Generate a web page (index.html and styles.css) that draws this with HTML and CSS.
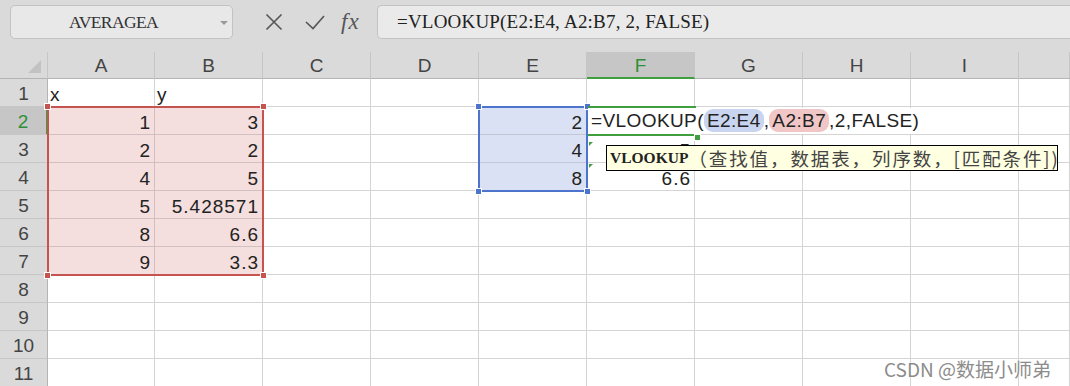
FILE: index.html
```html
<!DOCTYPE html>
<html lang="zh-CN">
    <head>
        <meta charset="UTF-8" />
        <title>VLOOKUP</title>
        <link rel="stylesheet" href="styles.css">
    </head>
    <body>
        <div class="toolbar">
            <div class="namebox">AVERAGEA<span class="caret"></span></div>
            <div class="fbtns">
                <svg class="ico" width="20" height="20" viewBox="0 0 20 20"><path d="M2.5 2.5 L17.5 17.5 M17.5 2.5 L2.5 17.5" /></svg>
                <svg class="ico ok" width="20" height="20" viewBox="0 0 20 20"><path d="M1 10 L8 16.5 L19 4" /></svg>
                <span class="fx">fx</span>
            </div>
            <div class="formula">=VLOOKUP(E2:E4, A2:B7, 2, FALSE)</div>
        </div>

        <div class="sheet">
            <div class="row head">
                <div class="corner"><span class="tri"></span></div>
                <div class="ch">A</div><div class="ch">B</div><div class="ch">C</div><div class="ch">D</div><div class="ch">E</div>
                <div class="ch sel">F</div><div class="ch">G</div><div class="ch">H</div><div class="ch">I</div><div class="ch"></div>
            </div>
            <div class="row">
                <div class="rh">1</div>
                <div class="c">x</div><div class="c">y</div><div class="c"></div><div class="c"></div><div class="c"></div>
                <div class="c"></div><div class="c"></div><div class="c"></div><div class="c"></div><div class="c"></div>
            </div>
            <div class="row">
                <div class="rh sel">2</div>
                <div class="c num red">1</div><div class="c num red">3</div><div class="c"></div><div class="c"></div><div class="c num blue">2</div>
                <div class="c"></div><div class="c"></div><div class="c"></div><div class="c"></div><div class="c"></div>
            </div>
            <div class="row">
                <div class="rh">3</div>
                <div class="c num red">2</div><div class="c num red">2</div><div class="c"></div><div class="c"></div><div class="c num blue">4</div>
                <div class="c num">5</div><div class="c"></div><div class="c"></div><div class="c"></div><div class="c"></div>
            </div>
            <div class="row">
                <div class="rh">4</div>
                <div class="c num red">4</div><div class="c num red">5</div><div class="c"></div><div class="c"></div><div class="c num blue">8</div>
                <div class="c num">6.6</div><div class="c"></div><div class="c"></div><div class="c"></div><div class="c"></div>
            </div>
            <div class="row">
                <div class="rh">5</div>
                <div class="c num red">5</div><div class="c num red">5.428571</div><div class="c"></div><div class="c"></div><div class="c"></div>
                <div class="c"></div><div class="c"></div><div class="c"></div><div class="c"></div><div class="c"></div>
            </div>
            <div class="row">
                <div class="rh">6</div>
                <div class="c num red">8</div><div class="c num red">6.6</div><div class="c"></div><div class="c"></div><div class="c"></div>
                <div class="c"></div><div class="c"></div><div class="c"></div><div class="c"></div><div class="c"></div>
            </div>
            <div class="row">
                <div class="rh">7</div>
                <div class="c num red">9</div><div class="c num red">3.3</div><div class="c"></div><div class="c"></div><div class="c"></div>
                <div class="c"></div><div class="c"></div><div class="c"></div><div class="c"></div><div class="c"></div>
            </div>
            <div class="row">
                <div class="rh">8</div>
                <div class="c"></div><div class="c"></div><div class="c"></div><div class="c"></div><div class="c"></div>
                <div class="c"></div><div class="c"></div><div class="c"></div><div class="c"></div><div class="c"></div>
            </div>
            <div class="row">
                <div class="rh">9</div>
                <div class="c"></div><div class="c"></div><div class="c"></div><div class="c"></div><div class="c"></div>
                <div class="c"></div><div class="c"></div><div class="c"></div><div class="c"></div><div class="c"></div>
            </div>
            <div class="row">
                <div class="rh">10</div>
                <div class="c"></div><div class="c"></div><div class="c"></div><div class="c"></div><div class="c"></div>
                <div class="c"></div><div class="c"></div><div class="c"></div><div class="c"></div><div class="c"></div>
            </div>
            <div class="row">
                <div class="rh">11</div>
                <div class="c"></div><div class="c"></div><div class="c"></div><div class="c"></div><div class="c"></div>
                <div class="c"></div><div class="c"></div><div class="c"></div><div class="c"></div><div class="c"></div>
            </div>

            <!-- range highlights and the in-cell editor sit over the grid -->
            <div class="range range-red">
                <span class="h tl"></span><span class="h tr"></span><span class="h bl"></span><span class="h br"></span>
            </div>
            <div class="range range-blue">
                <span class="h tl"></span><span class="h tr"></span><span class="h bl"></span><span class="h br"></span>
            </div>
            <span class="flag flag-1"></span>
            <span class="flag flag-2"></span>
            <div class="active-top"></div>
            <div class="active-bottom"><span class="h br"></span></div>
            <div class="editor">=VLOOKUP(<span class="pill pill-blue">E2:E4</span>,<span class="pill pill-red">A2:B7</span>,2,FALSE)</div>
            <div class="tip"><span class="fn">VLOOKUP</span><span class="args">（查找值，数据表，列序数，[匹配条件])</span></div>
        </div>

        <div class="mark">CSDN @数据小师弟</div>
    </body>
</html>
```

FILE: styles.css
```css
body {
    margin: 0;
    height: 386px;
    overflow: hidden;
    background-color: #dadada;
    font-family: "Liberation Sans", Arial, sans-serif;
    color: #222;
}

/* formula bar */
.toolbar {
    height: 52px;
    box-sizing: border-box;
    padding: 5px 0 0 10px;
    display: flex;
    align-items: flex-start;
}
.namebox {
    position: relative;
    width: 223px;
    height: 34px;
    box-sizing: border-box;
    padding-right: 16px;
    border: 1px solid #c2c2c2;
    border-radius: 5px;
    background-color: #e8e8e8;
    display: flex;
    align-items: center;
    justify-content: center;
    font: 17.5px "Liberation Serif", serif;
    letter-spacing: -0.6px;
    color: #333;
}
.caret {
    position: absolute;
    right: 4px;
    top: 15px;
    border-left: 4px solid transparent;
    border-right: 4px solid transparent;
    border-top: 4px solid #999;
}
.fbtns {
    width: 144px;
    height: 34px;
    box-sizing: border-box;
    padding-left: 31px;
    display: flex;
    align-items: center;
}
.ico {
    fill: none;
    stroke: #555;
    stroke-width: 1.6;
}
.ok {
    margin-left: 21px;
}
.fx {
    margin-left: 16px;
    font: italic 23px "Liberation Serif", serif;
    color: #555;
    letter-spacing: 1px;
}
.formula {
    flex: 1;
    height: 34px;
    box-sizing: border-box;
    padding-left: 19px;
    border: 1px solid #c2c2c2;
    border-right: none;
    border-radius: 5px 0 0 5px;
    background-color: #eaeaea;
    display: flex;
    align-items: center;
    font: 19px "Liberation Serif", serif;
    letter-spacing: 0.2px;
    color: #222;
}

/* grid */
.sheet {
    position: relative;
}
.row {
    display: grid;
    grid-template-columns: 48px 107px repeat(8, 108px) 51px;
    height: 28px;
}
.row > div {
    box-sizing: border-box;
    border-right: 1px solid #d4d4d4;
    border-bottom: 1px solid #d4d4d4;
}
.row.head {
    height: 27px;
}
.head > div {
    background-color: #dadada;
    border-right-color: #c6c6c6;
    border-bottom-color: #b4b4b4;
}
.corner {
    position: relative;
}
.tri {
    position: absolute;
    left: 28px;
    top: 8px;
    border-left: 13px solid transparent;
    border-bottom: 13px solid #c2c2c2;
}
.ch,
.rh {
    display: flex;
    align-items: center;
    justify-content: center;
    font-size: 19px;
    color: #444;
}
.ch {
    padding-top: 2px;
}
.head > .ch.sel {
    background-color: #c6c6c6;
    color: #2f8f36;
    border-bottom: 2px solid #3f9f3f;
}
.row > .rh {
    background-color: #dadada;
    border-right-color: #b4b4b4;
    border-bottom-color: #c6c6c6;
    align-items: flex-end;
    padding-bottom: 1px;
}
.row > .rh.sel {
    background-color: #c6c6c6;
    color: #2f8f36;
    border-right: 2px solid #3f9f3f;
}
.c {
    background-color: #fff;
    font-size: 19px;
    letter-spacing: 1px;
    display: flex;
    align-items: flex-end;
    padding: 0 3px 0 2px;
}
.num {
    justify-content: flex-end;
}
.row > .red {
    background-color: #f4dede;
    border-color: #d2c0c0;
}
.row > .blue {
    background-color: #dbe1f4;
    border-color: #c2c7d6;
}

/* overlays */
.range {
    position: absolute;
    box-sizing: border-box;
    border: 2px solid;
}
.range-red {
    left: 47px;
    top: 54px;
    width: 217px;
    height: 170px;
    border-color: #c55451;
    color: #c55451;
}
.range-blue {
    left: 478px;
    top: 54px;
    width: 110px;
    height: 86px;
    border-color: #4d74cc;
    color: #4d74cc;
}
.h {
    position: absolute;
    width: 5px;
    height: 5px;
    background-color: currentColor;
    border: 1px solid #fff;
}
.tl { left: -5px; top: -5px; }
.tr { right: -5px; top: -5px; }
.bl { left: -5px; bottom: -5px; }
.br { right: -5px; bottom: -5px; }

.flag {
    position: absolute;
    left: 589px;
    border-top: 4px solid #3f9f3f;
    border-right: 4px solid transparent;
}
.flag-1 { top: 90px; }
.flag-2 { top: 112px; }

.active-top,
.active-bottom {
    position: absolute;
    left: 588px;
    width: 108px;
    height: 2px;
    background-color: #3f9f3f;
    color: #3f9f3f;
}
.active-top { top: 54px; }
.active-bottom { top: 82px; }

.editor {
    position: absolute;
    left: 588px;
    top: 56px;
    width: 344px;
    height: 26px;
    box-sizing: border-box;
    padding-left: 3px;
    background-color: #fff;
    font-size: 19px;
    letter-spacing: 0.4px;
    line-height: 26px;
    color: #222;
    white-space: nowrap;
}
.pill {
    padding: 1px 3px;
    border-radius: 9px;
}
.pill-blue {
    background-color: #c9d5f0;
}
.pill-red {
    background-color: #f0c7c6;
}

.tip {
    position: absolute;
    left: 606px;
    top: 93px;
    width: 452px;
    height: 26px;
    box-sizing: border-box;
    padding-left: 3px;
    border: 1px solid #000;
    background-color: #ffffe1;
    display: flex;
    align-items: center;
    white-space: nowrap;
    color: #222;
}
.fn {
    font: bold 15.5px "Liberation Serif", serif;
}
.args {
    font: 18.5px "Noto Sans CJK SC", sans-serif;
    letter-spacing: 1.9px;
    color: #444;
}

.mark {
    position: absolute;
    left: 884px;
    top: 355px;
    font: 19px "Noto Sans CJK SC", sans-serif;
    color: #8c8c8c;
    text-shadow: 0 0 2px #fff;
}
```
